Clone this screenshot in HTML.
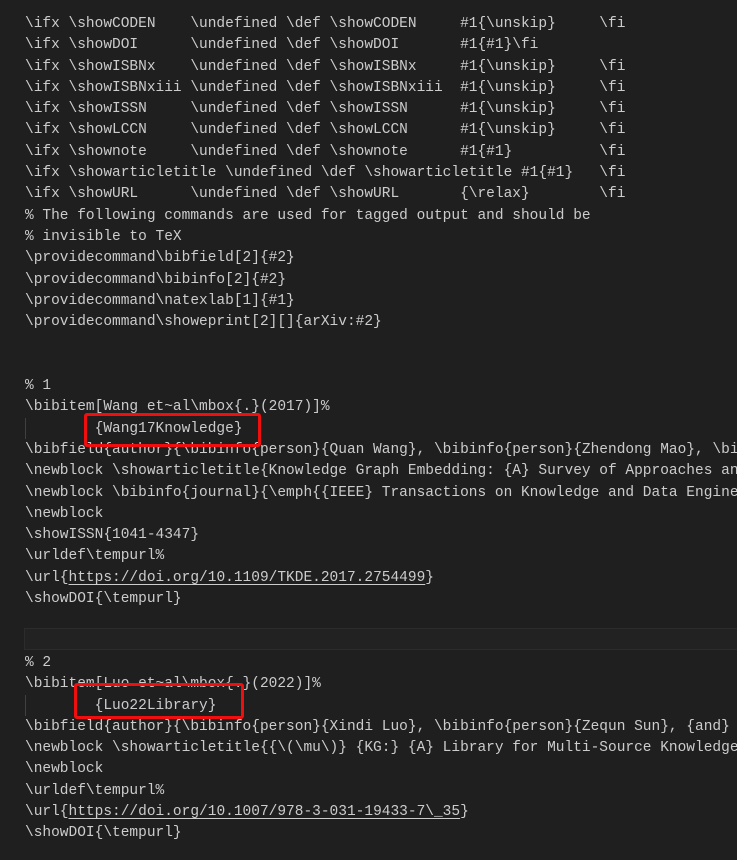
<!DOCTYPE html>
<html><head><meta charset="utf-8"><style>
html,body{margin:0;padding:0;background:#1f1f1f;width:737px;height:860px;overflow:hidden}
#w{position:relative;width:737px;height:860px;overflow:hidden}
pre{margin:0;position:absolute;left:25px;top:14px;width:712px;overflow:hidden;font-family:"Liberation Mono",monospace;font-size:14.5px;line-height:21.3px;color:#cccccc;white-space:pre}
.u{text-decoration:underline;text-underline-offset:3px}
.hl{position:absolute;left:24px;top:628px;width:713px;height:20px;border:1px solid #2c2c2c;background:#222}
.box{position:absolute;border:3px solid #f00f0f;border-radius:3px}
.g{position:absolute;left:25px;width:1px;height:21px;background:#404040}
</style></head><body><div id="w">
<div class="hl"></div>
<div class="g" style="top:418px"></div>
<div class="g" style="top:695px"></div>
<pre>\ifx \showCODEN    \undefined \def \showCODEN     #1{\unskip}     \fi
\ifx \showDOI      \undefined \def \showDOI       #1{#1}\fi
\ifx \showISBNx    \undefined \def \showISBNx     #1{\unskip}     \fi
\ifx \showISBNxiii \undefined \def \showISBNxiii  #1{\unskip}     \fi
\ifx \showISSN     \undefined \def \showISSN      #1{\unskip}     \fi
\ifx \showLCCN     \undefined \def \showLCCN      #1{\unskip}     \fi
\ifx \shownote     \undefined \def \shownote      #1{#1}          \fi
\ifx \showarticletitle \undefined \def \showarticletitle #1{#1}   \fi
\ifx \showURL      \undefined \def \showURL       {\relax}        \fi
% The following commands are used for tagged output and should be
% invisible to TeX
\providecommand\bibfield[2]{#2}
\providecommand\bibinfo[2]{#2}
\providecommand\natexlab[1]{#1}
\providecommand\showeprint[2][]{arXiv:#2}


% 1
\bibitem[Wang et~al\mbox{.}(2017)]%
        {Wang17Knowledge}
\bibfield{author}{\bibinfo{person}{Quan Wang}, \bibinfo{person}{Zhendong Mao}, \bibinfo
\newblock \showarticletitle{Knowledge Graph Embedding: {A} Survey of Approaches and Appl
\newblock \bibinfo{journal}{\emph{{IEEE} Transactions on Knowledge and Data Engineering}
\newblock
\showISSN{1041-4347}
\urldef\tempurl%
\url{<span class="u">https://doi.org/10.1109/TKDE.2017.2754499</span>}
\showDOI{\tempurl}


% 2
\bibitem[Luo et~al\mbox{.}(2022)]%
        {Luo22Library}
\bibfield{author}{\bibinfo{person}{Xindi Luo}, \bibinfo{person}{Zequn Sun}, {and} \bibi
\newblock \showarticletitle{{\(\mu\)} {KG:} {A} Library for Multi-Source Knowledge Graph
\newblock
\urldef\tempurl%
\url{<span class="u">https://doi.org/10.1007/978-3-031-19433-7\_35</span>}
\showDOI{\tempurl}</pre>
<div class="box" style="left:84px;top:413px;width:171px;height:28px"></div>
<div class="box" style="left:74px;top:683px;width:164px;height:30px"></div>
</div></body></html>
